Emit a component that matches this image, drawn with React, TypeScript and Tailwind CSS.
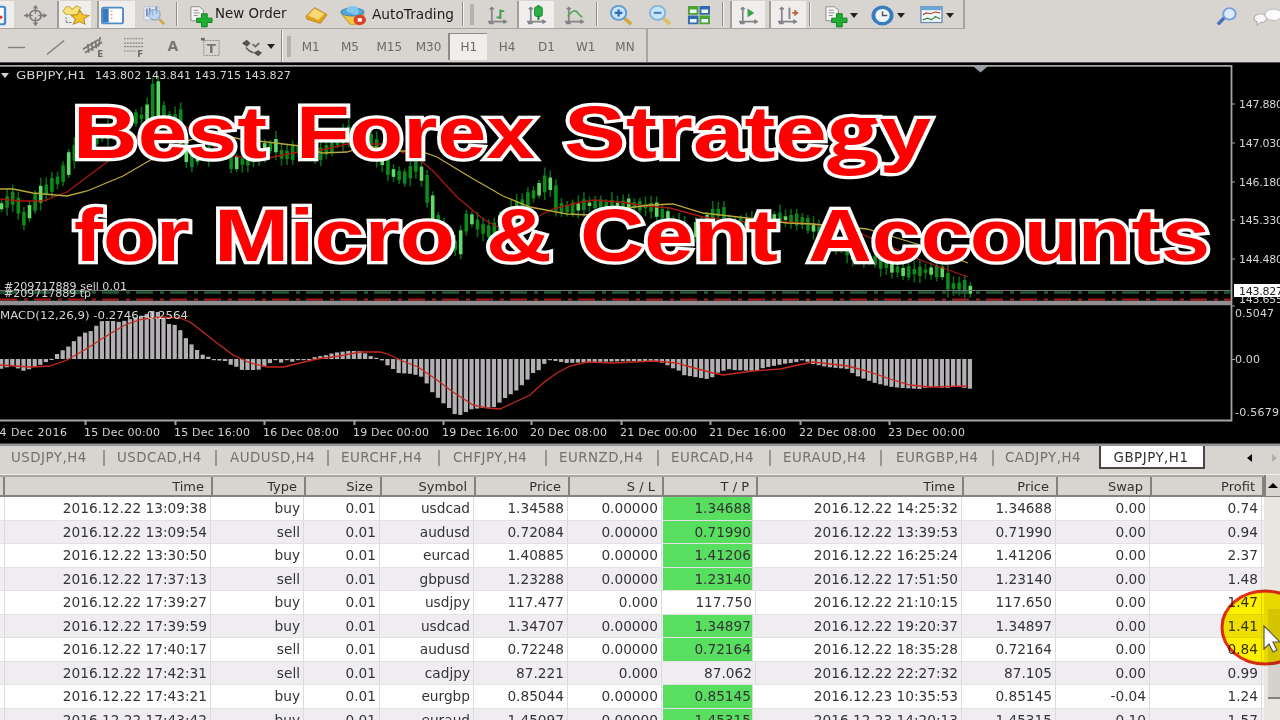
import clsx from 'clsx'
import React from 'react'

type Point = [number, number]

const timeframes = ['M1', 'M5', 'M15', 'M30', 'H1', 'H4', 'D1', 'W1', 'MN']

const tabs = [
  { label: 'USDJPY,H4', className: 'w-[105px] pl-[11px]' },
  { label: 'USDCAD,H4', className: 'w-[112px] pl-[12px]' },
  { label: 'AUDUSD,H4', className: 'w-[112px] pl-[13px]' },
  { label: 'EURCHF,H4', className: 'w-[111px] pl-[12px]' },
  { label: 'CHFJPY,H4', className: 'w-[107px] pl-[13px]' },
  { label: 'EURNZD,H4', className: 'w-[112px] pl-[12px]' },
  { label: 'EURCAD,H4', className: 'w-[112px] pl-[12px]' },
  { label: 'EURAUD,H4', className: 'w-[111px] pl-[12px]' },
  { label: 'EURGBP,H4', className: 'w-[112px] pl-[14px]' },
  { label: 'CADJPY,H4', className: 'w-[105px] pl-[11px]' },
]

const columns = [
  { label: 'Time', width: 'w-[208px]' },
  { label: 'Type', width: 'w-[93px]' },
  { label: 'Size', width: 'w-[76px]' },
  { label: 'Symbol', width: 'w-[94px]' },
  { label: 'Price', width: 'w-[94px]' },
  { label: 'S / L', width: 'w-[94px]' },
  { label: 'T / P', width: 'w-[94px]' },
  { label: 'Time', width: 'w-[206px]' },
  { label: 'Price', width: 'w-[94px]' },
  { label: 'Swap', width: 'w-[94px]' },
  { label: 'Profit', width: 'w-[112px]' },
]

const TP_COLUMN = 6

const rows = [
  ['2016.12.22 13:09:38', 'buy', '0.01', 'usdcad', '1.34588', '0.00000', '1.34688', '2016.12.22 14:25:32', '1.34688', '0.00', '0.74'],
  ['2016.12.22 13:09:54', 'sell', '0.01', 'audusd', '0.72084', '0.00000', '0.71990', '2016.12.22 13:39:53', '0.71990', '0.00', '0.94'],
  ['2016.12.22 13:30:50', 'buy', '0.01', 'eurcad', '1.40885', '0.00000', '1.41206', '2016.12.22 16:25:24', '1.41206', '0.00', '2.37'],
  ['2016.12.22 17:37:13', 'sell', '0.01', 'gbpusd', '1.23288', '0.00000', '1.23140', '2016.12.22 17:51:50', '1.23140', '0.00', '1.48'],
  ['2016.12.22 17:39:27', 'buy', '0.01', 'usdjpy', '117.477', '0.000', '117.750', '2016.12.22 21:10:15', '117.650', '0.00', '1.47'],
  ['2016.12.22 17:39:59', 'buy', '0.01', 'usdcad', '1.34707', '0.00000', '1.34897', '2016.12.22 19:20:37', '1.34897', '0.00', '1.41'],
  ['2016.12.22 17:40:17', 'sell', '0.01', 'audusd', '0.72248', '0.00000', '0.72164', '2016.12.22 18:35:28', '0.72164', '0.00', '0.84'],
  ['2016.12.22 17:42:31', 'sell', '0.01', 'cadjpy', '87.221', '0.000', '87.062', '2016.12.22 22:27:32', '87.105', '0.00', '0.99'],
  ['2016.12.22 17:43:21', 'buy', '0.01', 'eurgbp', '0.85044', '0.00000', '0.85145', '2016.12.23 10:35:53', '0.85145', '-0.04', '1.24'],
  ['2016.12.22 17:43:42', 'buy', '0.01', 'euraud', '1.45097', '0.00000', '1.45315', '2016.12.23 14:20:13', '1.45315', '-0.10', '1.57'],
]

// rows closed without hitting the take profit
const missedTp = [4, 7]

const macd: Point[] = [
  [0, 369], [12, 366], [24, 371], [38, 366], [50, 360], [57, 354], [63, 350], [69, 346], [74, 341], [80, 336], [86, 332], [91, 331],
  [97, 325], [102, 321], [113, 321], [120, 322], [127, 320], [133, 318], [147, 314], [152, 311], [158, 312], [163, 317], [169, 324],
  [175, 325], [181, 331], [187, 340], [192, 345], [198, 351], [203, 355], [209, 357], [213, 360], [225, 361], [231, 365], [237, 367],
  [242, 370], [258, 370], [265, 366], [270, 363], [275, 360], [282, 363], [287, 360], [293, 362], [298, 360], [308, 360], [315, 357],
  [327, 355], [333, 353], [347, 351], [362, 351], [367, 355], [377, 358], [383, 361], [387, 365], [393, 369], [398, 373], [413, 374],
  [422, 377], [427, 384], [432, 392], [438, 398], [443, 403], [449, 408], [454, 414], [460, 415], [466, 412], [472, 409], [495, 407],
  [500, 402], [505, 398], [517, 390], [522, 385], [528, 379], [533, 373], [539, 370], [544, 364], [550, 360], [567, 363], [593, 362],
  [633, 361], [660, 362], [667, 365], [672, 368], [678, 370], [683, 375], [707, 379], [713, 377], [717, 373], [728, 369], [733, 370],
  [757, 371], [763, 368], [773, 366], [783, 364], [797, 362], [803, 360], [813, 364], [827, 367], [848, 369], [852, 373], [857, 376],
  [867, 380], [875, 383], [883, 385], [892, 387], [902, 388], [920, 389], [928, 387], [947, 388], [953, 386], [972, 389],
]

const signal: Point[] = [
  [0, 365], [30, 367], [50, 366], [67, 360], [86, 349], [100, 340], [113, 332], [127, 324], [143, 319], [163, 317], [180, 318],
  [190, 322], [203, 332], [217, 343], [233, 355], [250, 363], [267, 367], [283, 367], [300, 363], [317, 359], [340, 356], [360, 352],
  [380, 352], [390, 355], [400, 360], [418, 367], [437, 380], [453, 392], [473, 405], [487, 408], [500, 409], [513, 403], [530, 395],
  [543, 383], [557, 373], [570, 366], [587, 362], [613, 363], [653, 361], [677, 363], [687, 366], [713, 373], [723, 375], [753, 371],
  [780, 369], [803, 364], [813, 362], [848, 366], [870, 372], [890, 379], [910, 385], [930, 387], [967, 386],
]

const price: Point[] = [
  [0, 207], [12, 198], [18, 206], [24, 220], [30, 210], [38, 196], [50, 186], [60, 178], [66, 168], [72, 156], [78, 146], [90, 140],
  [120, 128], [135, 118], [145, 116], [152, 102], [157, 97], [163, 114], [180, 122], [187, 154], [192, 162], [200, 154], [225, 150],
  [232, 164], [240, 162], [255, 158], [268, 148], [275, 145], [282, 156], [290, 154], [300, 148], [320, 154], [350, 132], [370, 140],
  [387, 166], [393, 173], [405, 178], [415, 166], [422, 175], [427, 190], [432, 210], [440, 230], [455, 246], [460, 243], [466, 222],
  [472, 219], [480, 228], [490, 232], [500, 222], [520, 206], [530, 197], [540, 188], [547, 181], [552, 186], [556, 200], [562, 209],
  [575, 208], [585, 204], [600, 205], [625, 204], [650, 207], [657, 210], [670, 220], [690, 235], [700, 225], [720, 211], [730, 225],
  [760, 222], [775, 217], [800, 220], [812, 227], [830, 242], [850, 252], [866, 258], [880, 262], [890, 266], [902, 272], [930, 271],
  [942, 272], [947, 281], [953, 286], [963, 286], [972, 291],
]

const fastMa: Point[] = [
  [0, 199], [20, 201], [43, 201], [67, 192], [87, 177], [107, 162], [130, 140], [155, 126], [185, 126], [213, 146], [233, 156],
  [263, 159], [293, 153], [327, 149], [347, 144], [383, 144], [420, 160], [433, 171], [457, 197], [483, 219], [500, 228], [520, 227],
  [537, 217], [553, 209], [573, 204], [593, 200], [620, 202], [647, 206], [670, 208], [703, 217], [740, 222], [770, 221], [813, 224],
  [857, 232], [873, 239], [923, 261], [968, 277],
]

const slowMa: Point[] = [
  [0, 189], [13, 189], [33, 193], [67, 196], [87, 191], [123, 176], [147, 162], [183, 142], [215, 133], [240, 139], [267, 142],
  [300, 146], [322, 153], [347, 152], [366, 146], [400, 151], [420, 151], [437, 157], [470, 177], [503, 196], [530, 207], [567, 214],
  [590, 215], [627, 208], [650, 205], [673, 204], [703, 213], [747, 218], [787, 223], [813, 224], [867, 229], [917, 244], [968, 263],
]

const priceLabels: [string, number][] = [
  ['147.880', 104], ['147.030', 143], ['146.180', 182], ['145.330', 220], ['144.480', 259],
]

const timeLabels: [string, number, number][] = [
  ['14 Dec 2016', -8, 75], ['15 Dec 00:00', 84, 76], ['15 Dec 16:00', 174, 76], ['16 Dec 08:00', 263, 76], ['19 Dec 00:00', 353, 76],
  ['19 Dec 16:00', 442, 76], ['20 Dec 08:00', 530, 77], ['21 Dec 00:00', 620, 77], ['21 Dec 16:00', 709, 77], ['22 Dec 08:00', 799, 77],
  ['23 Dec 00:00', 888, 77],
]

const titleWords: [string, number, number, number][] = [
  ['Best', 73, 158, 194], ['Forex', 296, 158, 239], ['Strategy', 564, 158, 367],
  ['for', 74, 261, 116], ['Micro', 214, 261, 241], ['&', 486, 261, 66], ['Cent', 580, 261, 198], ['Accounts', 808, 261, 402],
]

const STEP = 5.6

function valueAt(points: Point[], x: number) {
  for (let i = 1; i < points.length; i += 1) {
    const [x0, y0] = points[i - 1]
    const [x1, y1] = points[i]
    if (x <= x1) return y0 + ((y1 - y0) * (x - x0)) / (x1 - x0)
  }
  return points[points.length - 1][1]
}

const toPath = (points: Point[]) => points.map(([x, y]) => `${x},${y}`).join(' ')

const bars = Array.from({ length: 174 }, (_, i) => i * STEP + 1)

const candles = bars.map((x, i) => {
  const y = valueAt(price, x)
  const slope = Math.abs(valueAt(price, x + 3) - valueAt(price, Math.max(0, x - 3)))
  let half = 1.5 + (i * 7) % 5 + slope / 2
  if (x > 148 && x < 162) half = 18
  const wick = 3 + ((i * 5) % 6)
  return { x, y, half, wick, bright: (i * 3) % 7 < 2 }
})

function Icon({ children, className }: { children: React.ReactNode, className?: string }) {
  return (
    <svg
      viewBox="0 0 24 24"
      preserveAspectRatio="none"
      className={clsx('mt-[3px] h-[21px] w-[23px] shrink-0 overflow-visible', className)}
      fill="none"
    >
      {children}
    </svg>
  )
}

function Separator() {
  return <div className="h-6 w-[2px] shrink-0 border-l border-[#8f8c88] bg-[#f4f2ef]" />
}

function Cell({ className, pressed, children }: { className: string, pressed?: boolean, children?: React.ReactNode }) {
  return (
    <div
      className={clsx(
        'flex h-[27px] shrink-0 items-center',
        pressed && 'border-l-2 border-[#a29f9b] bg-[#efeeec]',
        className,
      )}
    >
      {children}
    </div>
  )
}

function Caret() {
  return <div className="mt-[2px] ml-[3px] h-0 w-0 border-x-4 border-t-[5px] border-x-transparent border-t-[#222]" />
}

function PlusSheet() {
  return (
    <Icon>
      <path d="M2 2h9l4 4v12H2z" fill="#f5f5f5" stroke="#888" />
      <path d="M5 6h5M5 9h6M5 12h4" stroke="#888" />
      <path d="M13 10h6v5h5v5h-5v5h-6v-5H8v-5h5z" fill="#1fae33" stroke="#0b7d1c" />
    </Icon>
  )
}

function Axes() {
  return <path d="M5 3v18M1 19h19M3 5l2-2 2 2M17 17l3 2-3 2M2 21h5" stroke="#858589" strokeWidth="1.8" />
}

function MainToolbar() {
  return (
    <div className="flex h-[29px] items-center">
      <div className="flex h-[29px] w-[965px] shrink-0 items-center border-r-2 border-b border-[#a7a4a0]">
        <Cell className="w-[14px] bg-[#efeeec]">
          <Icon className="-ml-[17px]">
            <rect x="2" y="2" width="21" height="20" rx="2" fill="#fff" stroke="#438ac8" strokeWidth="2.5" />
            <path d="M17 15l3-2" stroke="#d33" strokeWidth="3" />
          </Icon>
        </Cell>
        <Cell className="w-[43px] justify-center">
          <Icon>
            <circle cx="12" cy="12" r="6" stroke="#7b7b7d" strokeWidth="1.8" />
            <path d="M12 2v8M12 14v8M1 12h8M15 12h8M10 4l2-3 2 3M10 20l2 3 2-3M4 10l-3 2 3 2M20 10l3 2-3 2" stroke="#7b7b7d" strokeWidth="1.5" />
          </Icon>
        </Cell>
        <Cell className="w-[34px] justify-center" pressed>
          <Icon className="w-[25px]">
            <path d="M3 2h3l3 3 4-4 4 2-2 4 2 4H3l-3-4z" fill="#f8e27d" stroke="#cda93c" />
            <path d="M3 14v6h5" stroke="#777" strokeDasharray="2 1" />
            <path d="M16 6l3 5 6 1-5 4 1 6-5-3-6 3 2-6-4-4 6-1z" fill="#f6c62f" stroke="#b38a22" />
          </Icon>
        </Cell>
        <Cell className="ml-[6px] w-[38px] pl-[2px]" pressed>
          <Icon>
            <rect x="1" y="3" width="22" height="18" rx="2" fill="#fff" stroke="#4f8cc8" strokeWidth="2" />
            <path d="M2 4h6v16H2z" fill="#3878bf" />
            <path d="M10 7h2M10 11h2M10 15h2" stroke="#d66" />
          </Icon>
        </Cell>
        <Cell className="w-[41px] pl-2">
          <Icon>
            <path d="M1 2h16v15H1z" fill="#e9ecf3" stroke="#b9bec8" />
            <path d="M4 4v9M7 3v8M10 6v6M14 2v8" stroke="#6d88bd" strokeWidth="1.8" />
            <circle cx="12" cy="11" r="6" fill="#a9cdf1" fillOpacity=".65" stroke="#7b9bc2" />
            <path d="M17 16l5 6" stroke="#d2a642" strokeWidth="3" />
          </Icon>
        </Cell>
        <Separator />
        <Cell className="w-[124px] pl-[11px]">
          <PlusSheet />
          <span className="ml-[3px] text-[13.4px] text-[#1c1c1c]">New Order</span>
        </Cell>
        <Cell className="w-[36px] pl-[3px]">
          <Icon>
            <path d="M1 13L10 3l13 8-7 10L2 16z" fill="#e2a21f" stroke="#b9811c" />
            <path d="M3 12l7-8 10 6-6 7z" fill="#f9d972" />
          </Icon>
        </Cell>
        <Cell className="w-[124px] pl-[3px]">
          <Icon className="w-[25px]">
            <path d="M1 11h21L15 22H9z" fill="#f4c94a" stroke="#c99b2e" />
            <ellipse cx="11" cy="8" rx="11" ry="4.5" fill="#55a7da" stroke="#3a82b5" />
            <path d="M5 7q0-6 6-6t6 6-6 3-6-3z" fill="#82c5ea" />
            <circle cx="18" cy="17" r="6" fill="#d9432b" />
            <path d="M16 15h4v4h-4z" fill="#fff" />
          </Icon>
          <span className="ml-[6px] text-[13.700px] text-[#1c1c1c]">AutoTrading</span>
        </Cell>
        <Separator />
        <div className="ml-[6px] h-[21px] w-1 bg-[#b5b2ae]" />
        <Cell className="w-[43px] pl-[13px]">
          <Icon>
            <Axes />
            <path d="M14 5v11M10 14h4M14 7h4" stroke="#3d9a50" strokeWidth="2" />
          </Icon>
        </Cell>
        <Cell className="w-[37px] pl-[7px]" pressed>
          <Icon>
            <Axes />
            <path d="M13 0v17" stroke="#18752d" strokeWidth="2" />
            <rect x="9" y="2" width="8" height="11" rx="2" fill="#2bb047" stroke="#17812d" />
          </Icon>
        </Cell>
        <Cell className="w-[42px] pl-[10px]">
          <Icon>
            <Axes />
            <path d="M4 13q7-11 11-3l4 4" stroke="#4fa65e" strokeWidth="1.8" />
          </Icon>
        </Cell>
        <Separator />
        <Cell className="w-[39px] pl-[11px]">
          <Icon>
            <path d="M15 14l8 8" stroke="#d2a642" strokeWidth="4" />
            <circle cx="10" cy="9" r="8" fill="#c5e5fb" stroke="#5c9bd4" strokeWidth="2" />
            <path d="M6 9h8M10 5v8" stroke="#2b6db4" strokeWidth="2.4" />
          </Icon>
        </Cell>
        <Cell className="w-[39px] pl-[11px]">
          <Icon>
            <path d="M15 14l8 8" stroke="#dcc068" strokeWidth="4" />
            <circle cx="10" cy="9" r="8" fill="#c5e5fb" stroke="#86b4dc" strokeWidth="2" />
            <path d="M6 9h8" stroke="#4d83bd" strokeWidth="2.4" />
          </Icon>
        </Cell>
        <Cell className="w-[46px] pl-[11px]">
          <Icon>
            <path d="M1 1h11v10H1zM13 12h11v10H13z" fill="#4da331" />
            <path d="M13 1h11v10H13zM1 12h11v10H1z" fill="#3268ad" />
            <path d="M3 5h7v4H3zM15 5h7v4h-7zM3 16h7v4H3zM15 16h7v4h-7z" fill="#edf6fb" />
          </Icon>
        </Cell>
        <Separator />
        <Cell className="ml-[6px] w-[35px] pl-[6px]" pressed>
          <Icon>
            <Axes />
            <path d="M10 4v10l7-5z" fill="#37a349" />
          </Icon>
        </Cell>
        <Cell className="ml-[4px] w-[37px] pl-[6px]" pressed>
          <Icon>
            <Axes />
            <path d="M13 3v13" stroke="#858589" strokeWidth="2" />
            <path d="M22 9h-6M18 6l3 3-3 3" stroke="#c4623f" strokeWidth="2" />
          </Icon>
        </Cell>
        <div className="ml-[3px]"><Separator /></div>
        <Cell className="w-[58px] pl-[13px]">
          <PlusSheet />
          <Caret />
        </Cell>
        <Cell className="w-[49px] pl-[2px]">
          <Icon>
            <circle cx="12" cy="12" r="9.5" fill="#edf5fb" stroke="#3a7cc0" strokeWidth="4" />
            <path d="M12 7v5h5" stroke="#555" strokeWidth="1.5" />
          </Icon>
          <Caret />
        </Cell>
        <Cell className="w-[44px] pl-[2px]">
          <Icon>
            <rect x="1" y="2" width="22" height="18" fill="#f6f9fb" stroke="#6d91b5" strokeWidth="1.5" />
            <path d="M1 2h22v4H1z" fill="#6ea4d6" />
            <path d="M3 11l4-2 4 1 5-2 5 1" stroke="#b54835" strokeWidth="1.3" />
            <path d="M3 17l5-2 4 2 4-4 5 3" stroke="#378447" strokeWidth="1.3" />
          </Icon>
          <Caret />
        </Cell>
      </div>
      <Icon className="-mt-[3px] ml-[251px]">
        <path d="M9 13l-7 8" stroke="#4a70bd" strokeWidth="3.5" />
        <circle cx="14" cy="9" r="6.5" fill="#dcebfa" stroke="#7a9cd8" strokeWidth="2" />
      </Icon>
      <Icon className="-mt-[3px] ml-[15px] w-[26px]">
        <ellipse cx="6" cy="14" rx="6" ry="5" fill="#f5f5f5" stroke="#aaa" />
        <path d="M3 18v4l4-4" fill="#f5f5f5" stroke="#aaa" />
        <ellipse cx="18" cy="10" rx="8" ry="6.5" fill="#fbfbfb" stroke="#b5b5b5" />
      </Icon>
    </div>
  )
}

function LineToolbar() {
  return (
    <div className="flex h-[33px] w-[648px] items-center border-r-2 border-[#a7a4a0]">
      <Cell className="w-[36px] pl-[5px]">
        <Icon><path d="M3 12h18" stroke="#85827d" strokeWidth="1.6" /></Icon>
      </Cell>
      <Cell className="w-[38px] pl-[8px]">
        <Icon><path d="M3 20L21 4" stroke="#85827d" strokeWidth="1.6" /></Icon>
      </Cell>
      <Cell className="w-[42px] pl-[9px]">
        <Icon>
          <path d="M0 14L16 3M2 18L20 6M5 8l1 10M9 6l1 10M13 4l1 9M18 0l-2 11" stroke="#7a7773" strokeWidth="1.8" />
          <text x="15" y="23" fontSize="9" fontWeight="bold" fill="#6d6a66">E</text>
        </Icon>
      </Cell>
      <Cell className="w-[40px] pl-[7px]">
        <Icon>
          <path d="M1 2h20M1 7h20M1 11h20M1 16h13" stroke="#85827d" strokeWidth="1.3" strokeDasharray="2 1" />
          <text x="15" y="23" fontSize="9" fontWeight="bold" fill="#6d6a66">F</text>
        </Icon>
      </Cell>
      <Cell className="w-[38px] justify-center pt-[2px] text-[14px] font-bold text-[#7a7773]"><span className="-ml-1">A</span></Cell>
      <Cell className="w-[44px] pl-[6px]">
        <Icon>
          <rect x="4" y="4" width="16" height="17" stroke="#85827d" strokeDasharray="2 1" />
          <path d="M1 1h4v3H1z" fill="#6d6a66" />
          <text x="7" y="18" fontSize="14" fontWeight="bold" fill="#7a7773">T</text>
        </Icon>
      </Cell>
      <Cell className="w-[43px] pl-[3px]">
        <Icon className="h-[18px] w-[20px]">
          <path d="M1 7l5-4 4 4-4 4zM13 18l5-3 4 3-4 4z" fill="#55524f" />
          <path d="M5 12l4 4 4 2M12 8l3 3 4-4" stroke="#66635f" strokeWidth="1.8" />
        </Icon>
        <Caret />
      </Cell>
      <div className="h-8 w-[2px] border-l border-[#8f8c88] bg-[#f4f2ef]" />
      <div className="mt-[2px] ml-[4px] h-[21px] w-1 bg-[#b5b2ae]" />
      <div className="flex text-[12px] text-[#6b6966]">
        {timeframes.map((tf) => (
          <div
            key={tf}
            className={clsx(
              'mt-px flex h-[27px] w-[39.3px] items-center justify-center pt-px',
              tf === 'H1' && 'border-t border-l-2 border-[#8f8c88] bg-[#efeeec]',
            )}
          >
            {tf}
          </div>
        ))}
      </div>
    </div>
  )
}

function Chart() {
  return (
    <svg viewBox="0 62 1280 384" className="block h-[384px] w-[1280px] bg-black">
      <path d="M0 62.5h1280" stroke="#55545a" />
      <path d="M0 65.8h1231.5V420.5H0" fill="none" stroke="#a5a4a6" strokeWidth="1.8" />
      <path d="M973 66h15l-7.5 6.5z" fill="#9a9ea6" />

      {candles.map(({ x, y, half, wick, bright }) => (
        <g key={x}>
          <path d={`M${x + 0.5} ${y - half - wick}V${y + half + wick}`} stroke="#0a6a18" strokeWidth="1.6" />
          <path d={`M${x + 0.5} ${y - half}V${y + half}`} stroke={bright ? '#5fdc68' : '#0c8a1c'} strokeWidth="3.6" />
        </g>
      ))}
      <polyline points={toPath(fastMa)} fill="none" stroke="#a8180f" strokeWidth="1.3" />
      <polyline points={toPath(slowMa)} fill="none" stroke="#b9a936" strokeWidth="1.3" />

      <path d="M0 290.5H1231" stroke="#77787a" strokeWidth="1.2" />
      <path d="M0 292.5H1231" stroke="#1f5a34" strokeWidth="2.5" strokeDasharray="17 7 4 6" />
      <path d="M0 299.5H1231" stroke="#a81717" strokeWidth="2" strokeDasharray="17 7 4 6" />
      <path d="M0 303H1231" stroke="#918f92" strokeWidth="4.4" />

      {bars.map((x) => {
        const y = valueAt(macd, x)
        return <rect key={x} x={x - 2} y={Math.min(y, 359)} width="4.2" height={Math.max(1.2, Math.abs(y - 359))} fill="#b3b0b4" />
      })}
      <polyline points={toPath(signal)} fill="none" stroke="#c9291c" strokeWidth="1.3" />

      <g fill="#d4d4d4" fontSize="11">
        <path d="M1 73h8l-4 5z" />
        <text x="16" y="79" textLength="70" lengthAdjust="spacingAndGlyphs">GBPJPY,H1</text>
        <text x="95" y="79" textLength="196" lengthAdjust="spacingAndGlyphs">143.802 143.841 143.715 143.827</text>
        <text x="4" y="289.5" textLength="123" lengthAdjust="spacingAndGlyphs">#209717889 sell 0.01</text>
        <text x="4" y="297" textLength="87" lengthAdjust="spacingAndGlyphs">#209717889 tp</text>
        <text x="0" y="319" textLength="188" lengthAdjust="spacingAndGlyphs">MACD(12,26,9) -0.2746 -0.2564</text>
        {priceLabels.map(([label, y]) => (
          <g key={label}>
            <path d={`M1231 ${y}h4`} stroke="#a5a4a6" />
            <text x="1239" y={y + 4} textLength="44">{label}</text>
          </g>
        ))}
        <text x="1239" y="303" textLength="44">143.655</text>
        <rect x="1234" y="284" width="46" height="13" fill="#fff" />
        <text x="1239" y="294.5" textLength="44" fill="#222">143.827</text>
        <path d="M1231 359.5h4M1231 306h4" stroke="#a5a4a6" />
        <text x="1235" y="317" textLength="39">0.5047</text>
        <text x="1235" y="363" textLength="25">0.00</text>
        <text x="1235" y="416" textLength="44">-0.5679</text>
        {timeLabels.map(([label, x, length]) => (
          <g key={label}>
            <path d={`M${x + 1.5} 421v4`} stroke="#a5a4a6" strokeWidth="2" />
            <text x={x} y="435.5" textLength={length}>{label}</text>
          </g>
        ))}
      </g>
      <path d="M0 445H1280" stroke="#949295" strokeWidth="3" />
    </svg>
  )
}

function ChartTabs() {
  return (
    <div className="flex h-[29px] border-b border-[#efedea] text-[13.4px] tracking-[0.5px] text-[#73706d]">
      {tabs.map(({ label, className }, i) => (
        <div key={label} className={clsx('relative h-6 shrink-0 leading-[23px]', className)}>
          {label}
          {i < tabs.length - 1 && <div className="absolute top-1 right-0 h-4 w-[2px] bg-[#98958f]" />}
        </div>
      ))}
      <div className="h-[23px] w-[106px] shrink-0 border-x-2 border-b-2 border-[#4a4846] bg-white pr-[2px] text-center leading-[23px] text-[#33312f]">
        GBPJPY,H1
      </div>
      <div className="mt-2 ml-[42px] h-0 w-0 border-y-4 border-r-[5px] border-y-transparent border-r-black" />
      <div className="mt-2 ml-[20px] h-0 w-0 border-y-4 border-l-[5px] border-y-transparent border-l-[#b1aeaa]" />
    </div>
  )
}

function Trades() {
  return (
    <div className="relative flex h-[245px] overflow-hidden bg-white">
      <div className="w-[1264px] shrink-0">
        <div className="flex h-[22px] border-t-2 border-b-2 border-t-[#aaa7a3] border-b-[#84817d] bg-[#d8d5d0] text-[13px] text-[#33312f]">
          <div className="w-[5px] shrink-0 border-r-2 border-[#84817d]" />
          {columns.map(({ label, width }, i) => (
            <div key={i} className={clsx('shrink-0 border-r-2 border-[#84817d] pr-[7px] text-right leading-[20px]', width)}>
              {label}
            </div>
          ))}
        </div>
        {rows.map((row, r) => (
          <div
            key={row[0]}
            className={clsx('flex h-[23.5px] border-b border-[#e3e1e4] text-[13.7px] text-[#343336]', r % 2 ? 'bg-[#efedf0]' : 'bg-white')}
          >
            <div className="w-[5px] shrink-0 border-r border-[#dcdadd]" />
            {row.map((value, c) => (
              <div key={c} className={clsx('shrink-0 pr-[2px]', columns[c].width)}>
                <div
                  className={clsx(
                    'h-[22.5px] border-r border-[#dcdadd] pr-[3px] text-right leading-[22px]',
                    c === TP_COLUMN && !missedTp.includes(r) && 'mr-[3px] -ml-px bg-[#59df60] !pr-px',
                  )}
                >
                  {value}
                </div>
              </div>
            ))}
          </div>
        ))}
      </div>
      <div className="flex w-4 shrink-0 flex-col bg-[#e9e6e2]">
        <div className="flex h-[22px] items-center justify-center border-b border-l-2 border-[#84817d] bg-[#d8d5d0]">
          <div className="h-0 w-0 border-x-[5px] border-b-[5px] border-x-transparent border-b-black" />
        </div>
        <div className="mt-[112px] ml-1 h-[90px] border-b-2 border-[#84817d] bg-[#d5d2cd]" />
      </div>
      {/* click highlight and pointer */}
      <svg viewBox="1210 580 70 90" className="absolute top-[105px] left-[1210px] h-[90px] w-[70px] mix-blend-multiply">
        <ellipse cx="1265" cy="627.5" rx="43" ry="36.5" fill="#fff000" stroke="#e52d12" strokeWidth="3" />
      </svg>
      <svg viewBox="1260 620 20 36" className="absolute top-[145px] left-[1260px] h-9 w-5">
        <path d="M1264 626v23l5-5 4 8 4-2-4-8h7z" fill="#fff" stroke="#555" strokeWidth="1.2" />
      </svg>
    </div>
  )
}

export default function App() {
  return (
    <div className="relative h-[720px] w-[1280px] overflow-hidden bg-[#d8d5d0] font-['DejaVu_Sans',sans-serif] whitespace-pre">
      <MainToolbar />
      <LineToolbar />
      <Chart />
      <ChartTabs />
      <Trades />
      <svg viewBox="0 0 1280 320" className="absolute top-0 left-0 h-80 w-[1280px] font-['Liberation_Sans',sans-serif] font-bold">
        {titleWords.map(([word, x, y, length]) => (
          <text
            key={word}
            x={x}
            y={y}
            textLength={length}
            lengthAdjust="spacingAndGlyphs"
            fontSize="74"
            fill="#ff0000"
            stroke="#fff"
            strokeWidth="6.5"
            className="[paint-order:stroke]"
          >
            {word.split('g').map((part, i) => (
              <React.Fragment key={part}>
                {i > 0 && <tspan className="font-['Open_Sans',sans-serif]">g</tspan>}
                {part}
              </React.Fragment>
            ))}
          </text>
        ))}
      </svg>
    </div>
  )
}
